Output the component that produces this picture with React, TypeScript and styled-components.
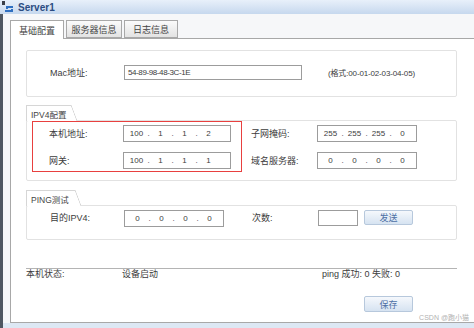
import React from "react";
import styled, { createGlobalStyle } from "styled-components";

const GlobalStyle = createGlobalStyle`
  html, body {
    margin: 0;
    padding: 0;
    background: #ffffff;
  }
  body {
    font-family: "Liberation Sans", "Noto Sans CJK SC", sans-serif;
    font-size: 9px;
    color: #3c3c3c;
  }
  * {
    box-sizing: border-box;
  }
`;

const Window = styled.div`
  width: 474px;
  height: 328px;
  display: flex;
  flex-direction: column;
  overflow: hidden;
`;

const TitleBar = styled.div`
  height: 14px;
  display: flex;
  align-items: center;
  gap: 4px;
  padding-left: 2px;
  background: linear-gradient(#e8f0fa, #c6d8ee);
  color: #2a4c82;
  font-weight: bold;
  font-size: 10px;
`;

const Body = styled.div`
  flex: 1;
  display: flex;
`;

const Strip = styled.div`
  width: 3px;
  background: #4f5762;
`;

const Main = styled.div`
  flex: 1;
  display: flex;
  flex-direction: column;
  padding: 6px 0 5px 7px;
  background: linear-gradient(
    to bottom,
    #f6f7f9 calc(100% - 5px),
    #dde8f4 calc(100% - 5px)
  );
`;

const TabBar = styled.div`
  display: flex;
  gap: 2px;
  height: 18px;
`;

const Tab = styled.div<{ $w: number; $active?: boolean }>`
  width: ${p => p.$w}px;
  height: ${p => (p.$active ? 19 : 18)}px;
  border: 1px solid #a8a8a8;
  border-bottom: ${p => (p.$active ? "none" : "1px solid #a8a8a8")};
  background: ${p =>
    p.$active ? "#ffffff" : "linear-gradient(#fbfbfb, #e3e3e3)"};
  display: flex;
  align-items: center;
  justify-content: center;
  position: relative;
  z-index: 1;
  color: #444;
`;

const Panel = styled.div`
  flex: 1;
  position: relative;
  background: #ffffff;
  border: 1px solid #a8a8a8;
  border-right: none;
  padding-left: 15px;
  display: flex;
  flex-direction: column;
`;

const Box = styled.div<{ $h: number; $mt?: number }>`
  width: 431px;
  height: ${p => p.$h}px;
  margin-top: ${p => p.$mt ?? 0}px;
  border: 1px solid #e2e2e2;
  border-radius: 2px;
  display: flex;
`;

const MacRow = styled.div`
  display: flex;
  align-items: center;
  padding: 13px 0 0 23px;
  height: 30px;
`;

const Label = styled.span<{ $w: number }>`
  width: ${p => p.$w}px;
  flex-shrink: 0;
  white-space: nowrap;
`;

const TextInput = styled.div<{ $w: number; $h: number }>`
  width: ${p => p.$w}px;
  height: ${p => p.$h}px;
  border: 1px solid #9c9c9c;
  background: #fff;
  display: flex;
  align-items: center;
  padding-left: 3px;
  font-size: 8px;
  letter-spacing: -0.4px;
`;

const Hint = styled.span`
  margin-left: 26px;
  white-space: nowrap;
  font-size: 8px;
  letter-spacing: -0.15px;
`;

const Group = styled.div<{ $mt: number }>`
  margin-top: ${p => p.$mt}px;
  display: flex;
  flex-direction: column;
`;

const GroupTab = styled.div<{ $w: number }>`
  position: relative;
  width: ${p => p.$w}px;
  height: 16px;
  margin-bottom: -1px;
  padding-left: 4px;
  border-top: 1px solid #d6d6d6;
  border-left: 1px solid #d6d6d6;
  background: #fff;
  display: flex;
  align-items: center;
  z-index: 1;
  font-size: 8.5px;
  color: #444;

  &::after {
    content: "";
    position: absolute;
    top: -1px;
    right: -6px;
    width: 6px;
    height: 16px;
    background: linear-gradient(
      to top right,
      #fff 44%,
      #d2d2d2 50%,
      transparent 56%
    );
  }
`;

const Highlight = styled.div`
  width: 210px;
  height: 51px;
  margin-left: 5px;
  border: 1px solid #e8403f;
  display: flex;
  flex-direction: column;
  gap: 10px;
  padding: 3px 0 0 16px;
`;

const Column = styled.div`
  display: flex;
  flex-direction: column;
  gap: 10px;
  padding: 4px 0 0 9px;
`;

const Row = styled.div`
  display: flex;
  align-items: center;
`;

const PingRow = styled(Row)`
  padding: 4px 0 0 23px;
  align-items: flex-start;
  line-height: 16px;
`;

const IpBox = styled.div<{ $w: number; $h: number }>`
  width: ${p => p.$w}px;
  height: ${p => p.$h}px;
  border: 1px solid #9c9c9c;
  background: #fff;
  display: flex;
  align-items: center;
  padding-left: 3px;
  font-size: 8px;
  color: #3c3c3c;
`;

const Seg = styled.span`
  width: 19px;
  text-align: center;
`;

const Dot = styled.span`
  width: 5px;
  text-align: center;
`;

const Button = styled.div<{ $h: number }>`
  width: 49px;
  height: ${p => p.$h}px;
  border: 1px solid #b7c8dc;
  border-radius: 2px;
  background: linear-gradient(#f5f8fc, #d6e3f1);
  color: #4d6fa5;
  display: flex;
  align-items: center;
  justify-content: center;
`;

const StatusRow = styled.div`
  margin-top: 28px;
  width: 431px;
  border-top: 1px solid #b4b4b4;
  display: grid;
  grid-template-columns: 96px 200px auto;
  line-height: 11px;
`;

const SaveRow = styled.div`
  margin-top: 16px;
  width: 431px;
  display: flex;
  justify-content: flex-end;
  padding-right: 44px;
`;

const Watermark = styled.span`
  position: absolute;
  right: 5px;
  bottom: 0;
  font-size: 7px;
  color: #b2b2b2;
  line-height: 8px;
`;

const ServerIcon = () => (
  <svg width="12" height="12" viewBox="0 0 12 12">
    <rect x="0" y="0" width="3" height="4" fill="#3a3f48" />
    <path d="M4 5h7v2H6v1h5v3H3V9h6V8H4z" fill="#2f6fc0" />
  </svg>
);

const Ip = ({ parts, w, h }: { parts: string[]; w: number; h: number }) => (
  <IpBox $w={w} $h={h}>
    {parts.map((p, i) => (
      <React.Fragment key={i}>
        {i > 0 && <Dot>.</Dot>}
        <Seg>{p}</Seg>
      </React.Fragment>
    ))}
  </IpBox>
);

const App = () => (
  <>
    <GlobalStyle />
    <Window>
      <TitleBar>
        <ServerIcon />
        Server1
      </TitleBar>
      <Body>
        <Strip />
        <Main>
          <TabBar>
            <Tab $w={54} $active>基础配置</Tab>
            <Tab $w={56}>服务器信息</Tab>
            <Tab $w={54}>日志信息</Tab>
          </TabBar>
          <Panel>
            <Box $h={47} $mt={11}>
              <MacRow>
                <Label $w={74}>Mac地址:</Label>
                <TextInput $w={178} $h={15}>54-89-98-48-3C-1E</TextInput>
                <Hint>(格式:00-01-02-03-04-05)</Hint>
              </MacRow>
            </Box>

            <Group $mt={8}>
              <GroupTab $w={45}>IPV4配置</GroupTab>
              <Box $h={61}>
                <Highlight>
                  <Row>
                    <Label $w={74}>本机地址:</Label>
                    <Ip parts={["100", "1", "1", "2"]} w={108} h={17} />
                  </Row>
                  <Row>
                    <Label $w={74}>网关:</Label>
                    <Ip parts={["100", "1", "1", "1"]} w={108} h={17} />
                  </Row>
                </Highlight>
                <Column>
                  <Row>
                    <Label $w={66}>子网掩码:</Label>
                    <Ip parts={["255", "255", "255", "0"]} w={100} h={17} />
                  </Row>
                  <Row>
                    <Label $w={66}>域名服务器:</Label>
                    <Ip parts={["0", "0", "0", "0"]} w={100} h={17} />
                  </Row>
                </Column>
              </Box>
            </Group>

            <Group $mt={9}>
              <GroupTab $w={49}>PING测试</GroupTab>
              <Box $h={35}>
                <PingRow>
                  <Label $w={74}>目的IPV4:</Label>
                  <Ip parts={["0", "0", "0", "0"]} w={100} h={17} />
                  <Label $w={66} style={{ marginLeft: 28 }}>次数:</Label>
                  <TextInput $w={40} $h={16} />
                  <Button $h={15} style={{ marginLeft: 6 }}>发送</Button>
                </PingRow>
              </Box>
            </Group>

            <StatusRow>
              <span>本机状态:</span>
              <span>设备启动</span>
              <span>ping 成功: 0 失败: 0</span>
            </StatusRow>

            <SaveRow>
              <Button $h={16}>保存</Button>
            </SaveRow>

            <Watermark>CSDN @跑小猫</Watermark>
          </Panel>
        </Main>
      </Body>
    </Window>
  </>
);

export default App;
